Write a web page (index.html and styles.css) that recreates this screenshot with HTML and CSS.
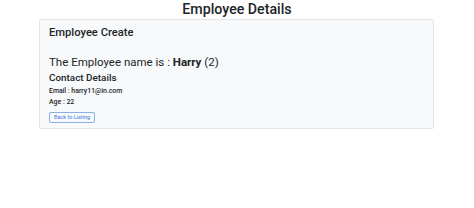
FILE: index.html
```html
<!DOCTYPE html>
<html lang="en">
<head>
    <meta charset="UTF-8">
    <title>Employee Details</title>
    <link rel="stylesheet" href="styles.css">
</head>
<body>
    <h1 class="page-title">Employee Details</h1>

    <div class="card">
        <h2 class="card-title">Employee Create</h2>

        <h3 class="emp-name">The Employee name is : <b>Harry</b> (2)</h3>
        <h4 class="contact-title">Contact Details</h4>
        <p class="info">Email : harry11@in.com</p>
        <p class="info">Age : 22</p>

        <button class="btn-back">Back to Listing</button>
    </div>
</body>
</html>
```

FILE: styles.css
```css
body {
    margin: 0;
    font-family: 'Roboto', 'Noto Sans', sans-serif;
    color: #212529;
    background: #fff;
}

.page-title {
    margin: 0;
    text-align: center;
    font-size: 14.2px;
    font-weight: 500;
    line-height: 19px;
}

.card {
    width: 375px;
    margin: 0 auto 0 39px;
    padding: 6px 9px 5px 9px;
    background-color: #f8f9fa;
    border: 1px solid #e3e6e9;
    border-radius: 2px;
}

.card-title {
    margin: 0 0 14px;
    font-size: 11.2px;
    font-weight: 500;
    line-height: 14px;
}

.emp-name {
    margin: 0;
    font-size: 11.5px;
    font-weight: 400;
    line-height: 16px;
}

.emp-name b {
    font-weight: 700;
}

.contact-title {
    margin: 0 0 2px;
    font-size: 9.9px;
    font-weight: 500;
    line-height: 15px;
}

.info {
    margin: 0 0 3px;
    font-size: 6.9px;
    font-weight: 500;
    line-height: 8px;
}

.btn-back {
    display: block;
    margin-top: 6px;
    padding: 1px 4px;
    font-family: inherit;
    font-size: 5.5px;
    line-height: 7px;
    color: #3b7ddd;
    background: transparent;
    border: 1px solid #8ab0ea;
    border-radius: 2px;
}
```
